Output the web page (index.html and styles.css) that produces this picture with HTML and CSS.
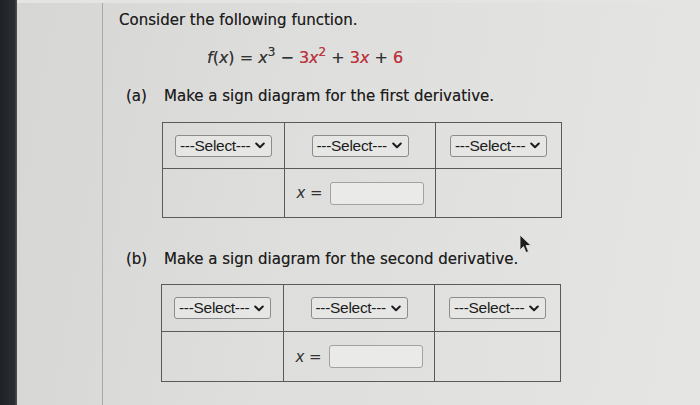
FILE: index.html
```html
<!DOCTYPE html>
<html>
<head>
<meta charset="utf-8">
<link rel="stylesheet" href="styles.css">
</head>
<body>
<div class="screen">
  <div class="bezel"></div>
  <div class="panel">
    <div class="gutter"></div>
    <div class="content">
      <p class="intro">Consider the following function.</p>
      <p class="formula"><i>f</i>(<i>x</i>) = <i>x</i><sup>3</sup> &minus; <span class="red">3<i>x</i><sup>2</sup></span> + <span class="red">3<i>x</i></span> + <span class="red">6</span></p>
      <p class="part"><span class="label">(a)</span><span>Make a sign diagram for the first derivative.</span></p>
      <table class="sign sign-a">
        <tr class="top">
          <td class="c1"><span class="select">---Select---<svg class="chev" viewBox="0 0 10 7"><path d="M1.2 1.5 L5 5.2 L8.8 1.5"/></svg></span></td>
          <td class="c2"><span class="select">---Select---<svg class="chev" viewBox="0 0 10 7"><path d="M1.2 1.5 L5 5.2 L8.8 1.5"/></svg></span></td>
          <td class="c3"><span class="select">---Select---<svg class="chev" viewBox="0 0 10 7"><path d="M1.2 1.5 L5 5.2 L8.8 1.5"/></svg></span></td>
        </tr>
        <tr class="bottom">
          <td></td>
          <td><span class="eq"><i>x</i> =</span><span class="input"></span></td>
          <td></td>
        </tr>
      </table>
      <p class="part part-b"><span class="label">(b)</span><span>Make a sign diagram for the second derivative.</span></p>
      <table class="sign sign-b">
        <tr class="top">
          <td class="c1"><span class="select">---Select---<svg class="chev" viewBox="0 0 10 7"><path d="M1.2 1.5 L5 5.2 L8.8 1.5"/></svg></span></td>
          <td class="c2"><span class="select">---Select---<svg class="chev" viewBox="0 0 10 7"><path d="M1.2 1.5 L5 5.2 L8.8 1.5"/></svg></span></td>
          <td class="c3"><span class="select">---Select---<svg class="chev" viewBox="0 0 10 7"><path d="M1.2 1.5 L5 5.2 L8.8 1.5"/></svg></span></td>
        </tr>
        <tr class="bottom">
          <td></td>
          <td><span class="eq"><i>x</i> =</span><span class="input"></span></td>
          <td></td>
        </tr>
      </table>
    </div>
  </div>
  <svg class="cursor" viewBox="0 0 14 20"><path d="M2 1 L2 16 L5.5 12.5 L8 18.5 L10.5 17.5 L8 11.5 L13 11.5 Z" fill="#1e1e1e" stroke="#e8e8e8" stroke-width="0.8"/></svg>
</div>
</body>
</html>
```
FILE: styles.css
```css
html, body {
  margin: 0;
  padding: 0;
}
body {
  width: 700px;
  height: 405px;
  overflow: hidden;
  background: #dcdcda;
}
.screen {
  position: relative;
  display: flex;
  width: 700px;
  height: 405px;
}
.bezel {
  width: 17px;
  flex: none;
  background: linear-gradient(90deg, #1e2125 0%, #2a2d31 85%, #50535a 100%);
}
.panel {
  flex: 1;
  display: flex;
  background: linear-gradient(100deg, #d6d6d4 0%, #dededc 40%, #e5e5e3 100%);
  border-top: 3px solid #e4e4e2;
}
.gutter {
  width: 85px;
  flex: none;
  border-right: 1px solid #a8a8a6;
}
.content {
  flex: 1;
  padding-left: 16px;
  padding-top: 8px;
  font-family: "DejaVu Sans", Verdana, sans-serif;
  font-size: 15px;
  color: #1e1e1e;
  text-shadow: 0 0 0.4px rgba(0, 0, 0, 0.5);
}
p {
  margin: 0;
}
.intro {
  line-height: 18px;
}
.formula {
  margin-top: 19px;
  margin-left: 88px;
  line-height: 19px;
  font-size: 16px;
  color: #333;
}
.formula sup {
  font-size: 12px;
  line-height: 0;
  vertical-align: 7px;
}
.red {
  color: #c9303a;
}
.part {
  display: flex;
  margin-top: 20px;
  margin-left: 7px;
  line-height: 18px;
}
.label {
  width: 38px;
}
.part-b {
  margin-top: 32px;
}
.sign {
  border-collapse: collapse;
  margin-left: 43px;
  margin-top: 17px;
  width: 398px;
  table-layout: fixed;
  text-shadow: none;
}
.sign-b {
  margin-left: 42px;
  margin-top: 16px;
  width: 395px;
}
.sign td {
  border: 1.5px solid #5a5a5a;
  padding: 0;
  text-align: center;
  vertical-align: middle;
}
.sign .c1 { width: 121px; }
.sign .c2 { width: 150px; }
.sign .c3 { width: 125px; }
.sign tr.top { height: 46px; }
.sign tr.bottom { height: 49px; }
.sign-b tr.top { height: 47px; }
.sign-b tr.bottom { height: 50px; }
.select {
  display: inline-flex;
  align-items: center;
  justify-content: space-between;
  box-sizing: border-box;
  width: 97px;
  height: 22px;
  padding: 0 6px 0 4px;
  border: 1px solid #8c8c8c;
  border-radius: 3px;
  background: #e6e6e4;
  font-family: "Liberation Sans", Arial, sans-serif;
  font-size: 15.5px;
  color: #1c1c1c;
  vertical-align: middle;
  letter-spacing: -0.3px;
}
.chev {
  width: 10px;
  height: 7px;
  fill: none;
  stroke: #1c1c1c;
  stroke-width: 2;
  stroke-linecap: round;
  stroke-linejoin: round;
}
.eq {
  display: inline-block;
  margin-right: 7px;
  color: #333;
  font-size: 15px;
  vertical-align: middle;
}
.input {
  display: inline-block;
  box-sizing: border-box;
  width: 94px;
  height: 23px;
  border: 1.5px solid #a2a2a2;
  border-radius: 3px;
  background: #eaeae8;
  vertical-align: middle;
}
.cursor {
  position: absolute;
  left: 518px;
  top: 234px;
  width: 14px;
  height: 20px;
}
```
